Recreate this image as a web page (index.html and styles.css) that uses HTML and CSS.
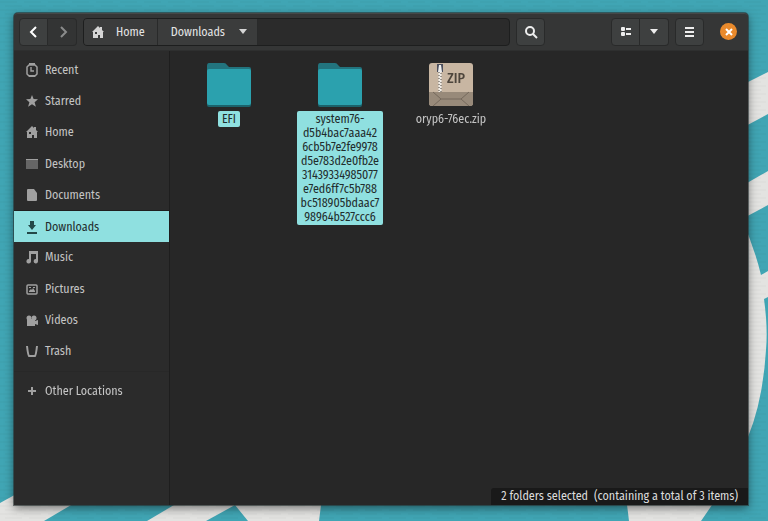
FILE: index.html
```html
<!DOCTYPE html>
<html lang="en">
<head>
    <meta charset="UTF-8">
    <meta name="viewport" content="width=device-width, initial-scale=1.0">
    <title>Downloads</title>
    <link rel="stylesheet" href="styles.css">
</head>
<body>
    <svg class="wallpaper" viewBox="0 0 768 521" preserveAspectRatio="xMidYMid slice" aria-hidden="true">
        <defs>
            <pattern id="weave" width="24" height="8" patternUnits="userSpaceOnUse"><path d="M0 2h17M5 6h17" stroke="#000" stroke-opacity="0.04"/></pattern>
        </defs>
        <rect width="768" height="521" fill="#40a5b4"/>
        <g fill="#e3e3e1">
            <path d="M0 503 100 448V488L44 521H0z"/>
            <path d="M147 521 260 454 235 505 206 521z"/>
            <path d="M235 505 225 492H323L321 505 319 521H248z"/>
            <path d="M626 490H722L712 505 701 521H629Q628 512 627 505z"/>
            <path d="M740 86 768 72V114L740 129z"/>
            <path d="M740 187 768 171V205L740 220z"/>
            <path d="M740 215Q754 246 761 275L768 271V297L764 299Q768 328 766 350Q763 400 748 437L740 450z"/>
        </g>
        <rect width="768" height="521" fill="url(#weave)"/>
    </svg>

    <div class="window">
        <header class="headerbar">
            <div class="linked">
                <button class="btn" aria-label="Back">
                    <svg width="16" height="16" viewBox="0 0 16 16"><path d="M10 3 5 8l5 5" fill="none" stroke="#fff" stroke-width="2"/></svg>
                </button>
                <button class="btn btn-off" aria-label="Forward" disabled>
                    <svg width="16" height="16" viewBox="0 0 16 16"><path d="M7 3l5 5-5 5" fill="none" stroke="#8a8b8b" stroke-width="2"/></svg>
                </button>
            </div>

            <nav class="pathbar" aria-label="Path">
                <button class="crumb">
                    <svg width="12" height="12" viewBox="0 0 12 12"><path fill-rule="evenodd" fill="#d5d5d5" d="M6 0 0 6h1v6h5V9h2v3h3V6h1l-2-2V1H8v1zM3 6h2v2H3z"/></svg>
                    <span>Home</span>
                </button>
                <button class="crumb">
                    <span>Downloads</span>
                    <svg width="8" height="5" viewBox="0 0 8 5"><path d="M0 0h8L4 5z" fill="#d5d5d5"/></svg>
                </button>
            </nav>

            <button class="btn" aria-label="Search">
                <svg width="14" height="14" viewBox="0 0 14 14" fill="none" stroke="#eee" stroke-width="2"><circle cx="6" cy="6" r="4"/><path d="M9 9l4 4"/></svg>
            </button>

            <div class="linked view">
                <button class="btn" aria-label="List view">
                    <svg width="12" height="10" viewBox="0 0 12 10" fill="#eee"><rect x="1" width="4" height="4" rx="1"/><rect x="1" y="5" width="4" height="4" rx="1"/><path d="M6 1h5v2H6zM6 6h5v2H6z"/></svg>
                </button>
                <button class="btn" aria-label="View options">
                    <svg width="8" height="5" viewBox="0 0 8 5"><path d="M0 0h8L4 5z" fill="#eee"/></svg>
                </button>
            </div>
            <button class="btn" aria-label="Menu">
                <svg width="10" height="10" viewBox="0 0 10 10" fill="#eee"><path d="M0 0h9v2H0zM0 4h9v2H0zM0 8h9v2H0z"/></svg>
            </button>
            <button class="close" aria-label="Close">
                <svg width="8" height="8" viewBox="0 0 8 8"><path d="M1 1l6 6M7 1L1 7" stroke="#fff" stroke-width="2"/></svg>
            </button>
        </header>

        <div class="main">
            <nav class="sidebar" aria-label="Places">
                <div class="places">
                    <a class="place" href="#">
                        <svg viewBox="0 0 12 14"><path d="M3 2h6l2 2v7l-2 2H3l-2-2V4z" fill="none" stroke="currentColor" stroke-width="1.5"/><path d="M3 0h6v2H3zM3 12h6v2H3z"/><path d="M5 4v4h3" fill="none" stroke="currentColor" stroke-width="1.4"/></svg>
                        Recent
                    </a>
                    <a class="place" href="#">
                        <svg viewBox="0 0 12 14"><path d="M6 1l1.6 4.1L12 5.300 8.600 8.200 9.900 12.800 6 10.200 2.100 12.800 3.400 8.200 0 5.300 4.400 5.100z"/></svg>
                        Starred
                    </a>
                    <a class="place" href="#">
                        <svg viewBox="0 0 12 14"><path fill-rule="evenodd" d="M6 1 0 7h1v6h5v-3h2v3h3V7h1l-2-2V2H8v1zM3 7h2v2H3z"/></svg>
                        Home
                    </a>
                    <a class="place" href="#">
                        <svg viewBox="0 0 12 14"><path d="M0 3h12v9H0z" fill="#666"/><path d="M0 2h12v1H0z"/></svg>
                        Desktop
                    </a>
                    <a class="place" href="#">
                        <svg viewBox="0 0 12 14"><path d="M2 1h6l3 4v7q0 1-1 1H2q-1 0-1-1V2q0-1 1-1z"/></svg>
                        Documents
                    </a>
                    <a class="place active" href="#" aria-current="page">
                        <svg viewBox="0 0 12 14"><path d="M4 1h4v4h2L6 10 2 5h2zM1 12h10v2H1z"/></svg>
                        Downloads
                    </a>
                    <a class="place" href="#">
                        <svg viewBox="0 0 12 14"><path d="M3 1h9v10.500a2.200 2.200 0 1 1-2-2.500V4H5v7.500a2.300 2.300 0 1 1-2-2.500z"/></svg>
                        Music
                    </a>
                    <a class="place" href="#">
                        <svg viewBox="0 0 12 14"><rect x="1" y="3" width="10" height="9" rx="1" fill="none" stroke="currentColor" stroke-width="1.500"/><path d="M3 10V9l2-2 1 1 1-2 2 3v1zM3 5h2v1H3zM7 5h2v1H7z"/></svg>
                        Pictures
                    </a>
                    <a class="place" href="#">
                        <svg viewBox="0 0 12 14"><circle cx="3" cy="5" r="2.500"/><circle cx="8" cy="5" r="2.500"/><path d="M1 6h8v2l3-1v5l-3-1v2H1z"/></svg>
                        Videos
                    </a>
                    <a class="place" href="#">
                        <svg viewBox="0 0 12 14"><path d="M1 2q1 9 2 10h6q1-1 2-10" fill="none" stroke="currentColor" stroke-width="2"/></svg>
                        Trash
                    </a>
                </div>
                <a class="place other" href="#">
                    <svg viewBox="0 0 12 14"><path d="M5 3h2v3h3v2H7v3H5V8H2V6h3z"/></svg>
                    Other Locations
                </a>
            </nav>

            <main class="files">
                <figure class="file selected">
                    <svg class="file-icon" viewBox="0 0 44 44"><path d="M0 3q0-3 2-3h15q2 0 3 2l2 2h20q2 0 2 2v10H0z" fill="#22747e"/><path d="M0 12h44v30q0 2-2 2H2q-2 0-2-2z" fill="#1b626b"/><rect y="6" width="44" height="36" rx="2" fill="#2ba1ae"/></svg>
                    <figcaption>EFI</figcaption>
                </figure>
                <figure class="file selected">
                    <svg class="file-icon" viewBox="0 0 44 44"><path d="M0 3q0-3 2-3h15q2 0 3 2l2 2h20q2 0 2 2v10H0z" fill="#22747e"/><path d="M0 12h44v30q0 2-2 2H2q-2 0-2-2z" fill="#1b626b"/><rect y="6" width="44" height="36" rx="2" fill="#2ba1ae"/></svg>
                    <figcaption>system76-<br>d5b4bac7aaa42<br>6cb5b7e2fe9978<br>d5e783d2e0fb2e<br>31439334985077<br>e7ed6ff7c5b788<br>bc518905bdaac7<br>98964b527ccc6</figcaption>
                </figure>
                <figure class="file">
                    <svg class="file-icon" viewBox="0 0 44 44"><rect width="44" height="43" rx="3" fill="#c8b6a2"/><path d="M0 29h44v11q0 3-3 3H3q-3 0-3-3z" fill="#988a7a"/><path d="M4 29l8 7-8 7M40 29l-8 7 8 7M12 36h20" fill="none" stroke="#75695c"/><path d="M11 8v21" stroke="#f2eee8" stroke-width="3"/><path d="M10 9v20" stroke="#4d4741" stroke-dasharray="1 2"/><path d="M12 10v19" stroke="#4d4741" stroke-dasharray="1 2"/><path d="M8 1h6v8H8z" fill="#4b4e5c"/><path d="M10 2h2l1 7H9z" fill="#eee"/><text class="zip-text" x="18" y="20">ZIP</text></svg>
                    <figcaption>oryp6-76ec.zip</figcaption>
                </figure>
            </main>
            <div class="status"><span>2 folders selected</span><span>(containing a total of 3 items)</span></div>
        </div>
    </div>
</body>
</html>
```

FILE: styles.css
```css
* {
    box-sizing: border-box;
}

body {
    margin: 0;
    min-height: 100vh;
    padding: 13px 20px 16px 14px;
    display: flex;
    background-color: #40a5b4;
    font-family: 'Fira Sans Condensed', 'Roboto Condensed', 'Open Sans Condensed', 'Noto Sans CJK SC', sans-serif;
    font-size: 12px;
    line-height: 16px;
    color: #c4c4c4;
}

button {
    font: inherit;
    color: inherit;
    padding: 0;
    border: none;
    background: none;
}

svg {
    display: block;
    flex: none;
}

.wallpaper {
    position: fixed;
    inset: 0;
    width: 100%;
    height: 100%;
    z-index: -1;
}

.window {
    flex: 1;
    display: flex;
    flex-direction: column;
    background-color: #272727;
    border-radius: 4px 4px 0 0;
    box-shadow: 0 0 0 1px rgba(40, 50, 50, 0.6), 0 3px 10px rgba(0, 0, 0, 0.5);
}

/* header bar */
.headerbar {
    display: flex;
    align-items: center;
    gap: 6px;
    height: 38px;
    padding: 0 11px 1px 5px;
    background-color: #353636;
    border-top: 1px solid #464848;
    border-bottom: 1px solid #2e2f2f;
    border-radius: 4px 4px 0 0;
}

.linked {
    display: flex;
}

.btn {
    width: 29px;
    height: 28px;
    display: flex;
    align-items: center;
    justify-content: center;
    background-color: #3e4040;
    border: 1px solid #292a2a;
    border-radius: 4px;
}

.btn-off {
    background-color: #333434;
}

.linked .btn:first-child {
    border-radius: 4px 0 0 4px;
}

.linked .btn:last-child {
    border-left: none;
    border-radius: 0 4px 4px 0;
}

.pathbar {
    flex: 1;
    display: flex;
    height: 28px;
    background-color: #2b2b2b;
    border: 1px solid #1d1e1e;
    border-radius: 4px;
    overflow: hidden;
}

.crumb {
    display: flex;
    align-items: center;
    gap: 12px;
    padding: 0 12px 0 8px;
    background-color: #3b3c3c;
    border-right: 1px solid #292a2a;
    color: #e4e4e4;
}

.crumb + .crumb {
    gap: 14px;
    padding: 0 10px 0 13px;
}

.view {
    margin-left: 60px;
}

.close {
    width: 17px;
    height: 17px;
    margin-left: 10px;
    display: flex;
    align-items: center;
    justify-content: center;
    background-color: #e98a2c;
    border-radius: 50%;
}

/* places and files */
.main {
    flex: 1;
    display: flex;
    position: relative;
}

.sidebar {
    width: 156px;
    padding-top: 3px;
    background-color: #2b2b2b;
    border-right: 1px solid #1e1e1e;
}

.places {
    display: grid;
    grid-auto-rows: 1fr;
    height: 313px;
}

.place {
    display: flex;
    align-items: center;
    gap: 7px;
    padding-left: 12px;
    color: #c4c4c4;
    text-decoration: none;
}

.place svg {
    width: 12px;
    height: 14px;
    fill: currentColor;
    color: #a0a0a0;
}

.place.active {
    background-color: #8fe0e0;
    border-top: 1px solid #1f1f1f;
    color: #1f2c2c;
}

.place.active svg {
    color: #234848;
}

.other {
    height: 38px;
    margin-top: 4px;
    border-top: 1px solid #282828;
}

.files {
    flex: 1;
    display: flex;
    align-items: flex-start;
    gap: 21px;
    padding: 12px 14px;
}

.file {
    width: 90px;
    margin: 0;
    display: flex;
    flex-direction: column;
    align-items: center;
    gap: 4px;
}

.file-icon {
    width: 44px;
    height: 44px;
}

.file figcaption {
    padding: 1px 4px;
    line-height: 14px;
    text-align: center;
    white-space: nowrap;
}

.selected figcaption {
    background-color: #8fe0e0;
    border-radius: 2px;
    color: #1f2c2c;
}

.zip-text {
    font-size: 14px;
    font-weight: 500;
    fill: #4d453c;
}

/* floating selection summary */
.status {
    position: absolute;
    right: 0;
    bottom: 0;
    display: flex;
    gap: 6px;
    padding: 0 10px 1px;
    background-color: #191919;
    border-radius: 3px 0 0 0;
    color: #dcdcdc;
}
```
